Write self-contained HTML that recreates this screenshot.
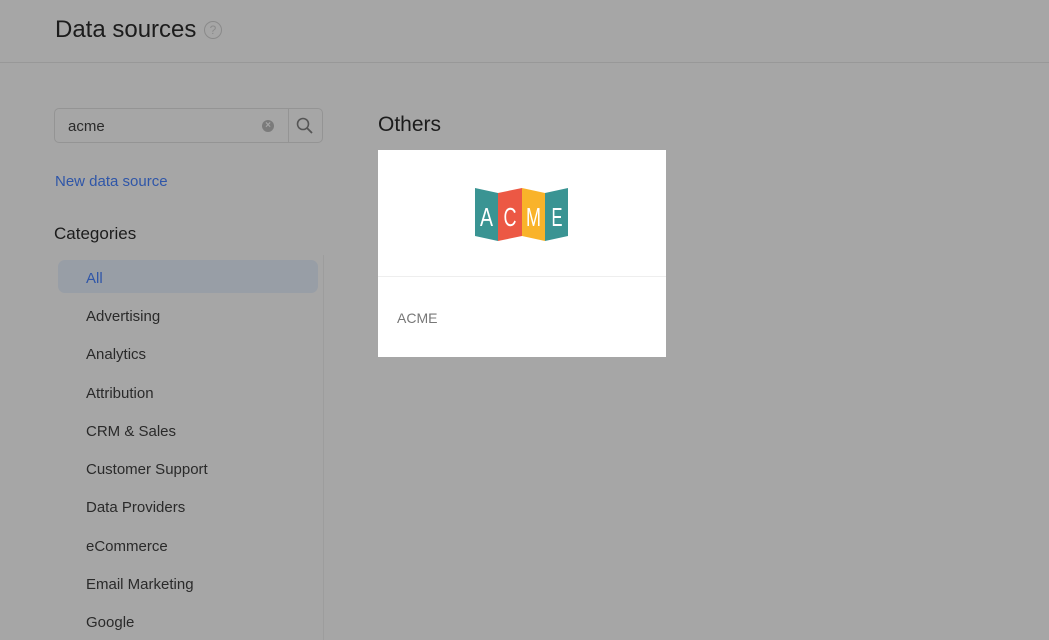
<!DOCTYPE html>
<html><head><meta charset="utf-8"><style>
html,body{margin:0;padding:0}
body{width:1049px;height:640px;background:#a6a6a6;font-family:"Liberation Sans",sans-serif;position:relative;overflow:hidden;color:#2a2a2a}
.hdr{position:absolute;left:0;top:0;width:1049px;height:62px;border-bottom:1px solid #989898}
.t{position:absolute;left:55px;top:16px;font-size:24px;color:#1c1c1c}
.q{position:absolute;left:204px;top:21px;width:16px;height:16px;border:1.5px solid #8a8a8a;border-radius:50%;color:#8a8a8a;font-size:12px;text-align:center;line-height:16px}
.search{position:absolute;left:54px;top:108px;width:269px;height:35px;border:1px solid #949494;border-radius:5px;box-sizing:border-box}
.search span{position:absolute;left:13px;top:9px;font-size:15px;color:#2a2a2a}
.clr{position:absolute;left:207px;top:11px;width:12px;height:12px;border-radius:50%;background:#7b7b7b;color:#a6a6a6;font-size:10px;line-height:12px;text-align:center;font-weight:bold}
.sep{position:absolute;left:233px;top:0;width:1px;height:33px;background:#949494}
.link{position:absolute;left:55px;top:173px;font-size:15px;color:#2f56a8}
.cat{position:absolute;left:54px;top:224px;font-size:17px;color:#1c1c1c}
.sel{position:absolute;left:58px;top:260px;width:260px;height:33px;border-radius:7px;background:#989ea6}
.vl{position:absolute;left:323px;top:255px;width:1px;height:385px;background:#9d9d9d}
.item{position:absolute;left:86px;font-size:15px;color:#2a2a2a}
.oth{position:absolute;left:378px;top:113px;font-size:21px;color:#1c1c1c}
.card{position:absolute;left:378px;top:150px;width:288px;height:207px;background:#fff}
.card .line{position:absolute;left:0;top:126px;width:288px;height:1px;background:#eee}
.card .n{position:absolute;left:19px;top:160px;font-size:14px;color:#777}
</style></head><body>
<div class="hdr"><div class="t">Data sources</div><div class="q">?</div></div>
<div class="search"><span>acme</span><div class="clr">×</div><div class="sep"></div>
<svg style="position:absolute;left:241px;top:8px" width="18" height="18" viewBox="0 0 18 18"><circle cx="7" cy="7" r="5.5" fill="none" stroke="#555" stroke-width="1.6"/><line x1="11" y1="11" x2="16" y2="16" stroke="#555" stroke-width="1.8"/></svg></div>
<div class="link">New data source</div>
<div class="cat">Categories</div>
<div class="sel"></div><div class="vl"></div>
<div class="item" style="top:270px;color:#2f56a8">All</div>
<div class="item" style="top:308px">Advertising</div>
<div class="item" style="top:346px">Analytics</div>
<div class="item" style="top:385px">Attribution</div>
<div class="item" style="top:423px">CRM &amp; Sales</div>
<div class="item" style="top:461px">Customer Support</div>
<div class="item" style="top:499px">Data Providers</div>
<div class="item" style="top:538px">eCommerce</div>
<div class="item" style="top:576px">Email Marketing</div>
<div class="item" style="top:614px">Google</div>
<div class="oth">Others</div>
<div class="card">
<svg style="position:absolute;left:96px;top:35px" width="96" height="58" viewBox="0 0 96 58">
<polygon points="1,3 24,8 24,56 1,51" fill="#3a9493"/>
<polygon points="24,8 48,3 48,51 24,56" fill="#ec5844"/>
<polygon points="48,3 71,8 71,56 48,51" fill="#f9b32a"/>
<polygon points="71,8 94,3 94,51 71,56" fill="#3a9493"/>
<g font-family="Liberation Sans Narrow,Liberation Sans,sans-serif" font-size="26" fill="#fff" text-anchor="middle">
<text x="12.5" y="41" textLength="13" lengthAdjust="spacingAndGlyphs">A</text>
<text x="36" y="41" textLength="13" lengthAdjust="spacingAndGlyphs">C</text>
<text x="59.5" y="41" textLength="15" lengthAdjust="spacingAndGlyphs">M</text>
<text x="83" y="41" textLength="11" lengthAdjust="spacingAndGlyphs">E</text>
</g>
</svg>
<div class="line"></div><div class="n">ACME</div></div>
</body></html>
